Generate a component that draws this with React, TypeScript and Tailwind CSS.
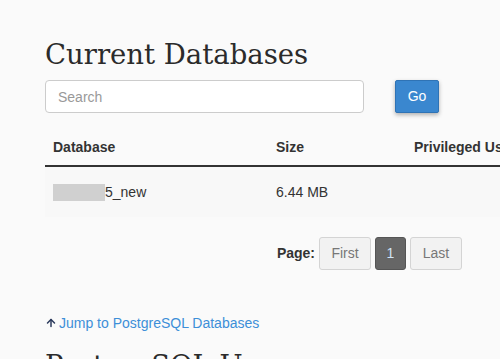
import { ArrowUp } from "lucide-react";

const sans = { fontFamily: '"Liberation Sans", Arial, sans-serif' };

function PageButton({ label, active }: { label: string; active?: boolean }) {
  return (
    <button
      type="button"
      className={
        active
          ? "h-[33px] w-[31px] rounded-[3px] border border-[#555] bg-[#666] text-[14px] text-[#cfe4f7]"
          : "h-[33px] min-w-[52px] rounded-[3px] border border-[#d4d4d4] bg-[#f2f2f2] px-[11px] text-[14px] text-[#777]"
      }
    >
      {label}
    </button>
  );
}

export default function App() {
  return (
    <div className="w-[500px] h-[359px] overflow-hidden bg-[#fafafa] text-[#333]" style={sans}>
      <div className="w-[640px] pl-[45px] pt-[37px]">
        <h1
          className="text-[27.5px] leading-[34px] text-[#2b2b2b]"
          style={{ fontFamily: '"DejaVu Serif", Georgia, serif' }}
        >
          Current Databases
        </h1>

        <div className="mt-[9px] flex items-center gap-[31px]">
          <input
            type="text"
            placeholder="Search"
            className="h-[33px] w-[319px] rounded-[4px] border border-[#ccc] bg-white px-[12px] text-[14px] text-[#333] placeholder:text-[#999] outline-none"
          />
          <button
            type="button"
            className="h-[33px] w-[44px] rounded-[2px] border border-[#2f73b5] bg-[#3a87cf] text-[14px] text-white shadow-[0_2px_4px_rgba(0,0,0,0.3)]"
          >
            Go
          </button>
        </div>

        <table className="mt-[16px] w-[560px] border-collapse text-[14px]">
          <thead>
            <tr className="border-b-2 border-[#333]">
              <th className="h-[37px] w-[223px] px-[8px] text-left font-bold">Database</th>
              <th className="h-[37px] w-[138px] px-[8px] text-left font-bold">Size</th>
              <th className="h-[37px] px-[8px] text-left font-bold whitespace-nowrap">Privileged Users</th>
            </tr>
          </thead>
          <tbody>
            <tr className="bg-[#f8f8f8]">
              <td className="h-[51px] px-[8px]">
                <span className="flex items-center">
                  <span className="inline-block h-[17px] w-[52px] bg-[#d0d0d0]" />
                  <span>5_new</span>
                </span>
              </td>
              <td className="h-[51px] px-[8px]">6.44 MB</td>
              <td className="h-[51px] px-[8px]" />
            </tr>
          </tbody>
        </table>

        <div className="mt-[20px] flex w-[417px] items-center justify-end gap-[4px]">
          <span className="text-[14px] font-bold text-[#333]">Page:</span>
          <PageButton label="First" />
          <PageButton label="1" active />
          <PageButton label="Last" />
        </div>

        <a href="#" className="mt-[43px] flex items-center gap-[2px] text-[14px] leading-[20px] text-[#3d8fd8]">
          <ArrowUp className="h-[16px] w-[12px] text-[#2b3a5c]" strokeWidth={3} />
          Jump to PostgreSQL Databases
        </a>

        <h2
          className="mt-[15px] text-[27.5px] leading-[34px] text-[#2b2b2b] whitespace-nowrap"
          style={{ fontFamily: '"DejaVu Serif", Georgia, serif' }}
        >
          PostgreSQL Users
        </h2>
      </div>
    </div>
  );
}
